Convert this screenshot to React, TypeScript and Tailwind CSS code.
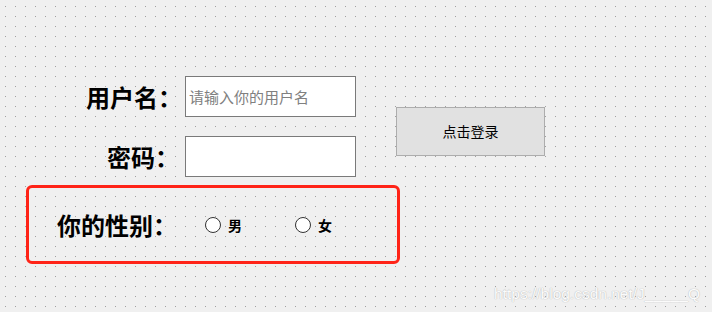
import { useState } from "react";

// ===========================================================================
// Login form (designer preview with dotted grid)
// ===========================================================================

const CJK = "font-['Noto_Sans_CJK_SC','Noto_Sans',sans-serif]";

interface RadioProps {
  label: string;
  checked: boolean;
  onSelect: () => void;
}

function Radio(props: RadioProps) {
  const { label, checked, onSelect } = props;
  return (
    <label className="flex items-center gap-[7px] cursor-pointer" onClick={onSelect}>
      <span className="flex h-4 w-4 items-center justify-center rounded-full border border-[#333333] bg-white">
        {checked && <span className="h-2 w-2 rounded-full bg-[#333333]" />}
      </span>
      <span className="text-[14px] font-bold leading-none text-black">{label}</span>
    </label>
  );
}

export default function App() {
  const [usuario, setUsuario] = useState("");
  const [senha, setSenha] = useState("");
  const [sexo, setSexo] = useState<string | null>(null);

  return (
    <div
      className={
        "relative h-[312px] w-[712px] overflow-hidden bg-[#f0f0f0] " +
        "bg-[linear-gradient(to_bottom,transparent_1px,#f0f0f0_1px),linear-gradient(to_right,#a0a0a0_1px,#f0f0f0_1px)] " +
        "bg-[length:10px_10px] bg-[position:5px_6px] " +
        CJK
      }
    >
      <div className="flex pt-[76px]">
        {/* linhas de usuario / senha */}
        <div className="flex flex-col gap-[19px]">
          <div className="flex items-center">
            <span className="w-[182px] text-right text-[24px] font-bold leading-none text-black">
              用户名：
            </span>
            <input
              className="ml-[3px] h-[41px] w-[171px] border border-[#7a7a7a] bg-white pl-[3px] text-[15px] text-black outline-none placeholder:text-[#808080]"
              placeholder="请输入你的用户名"
              value={usuario}
              onChange={(e) => setUsuario(e.target.value)}
            />
          </div>
          <div className="flex items-center">
            <span className="w-[179px] text-right text-[24px] font-bold leading-none text-black">
              密码：
            </span>
            <input
              type="password"
              className="ml-[6px] h-[41px] w-[171px] border border-[#7a7a7a] bg-white pl-[3px] text-[15px] outline-none"
              value={senha}
              onChange={(e) => setSenha(e.target.value)}
            />
          </div>
        </div>

        <button className="ml-[40px] mt-[31px] h-[49px] w-[149px] border border-[#adadad] bg-[#e1e1e1] text-[14px] text-black">
          点击登录
        </button>
      </div>

      {/* grupo de sexo */}
      <div className="ml-[26px] mt-[8px] flex h-[79px] w-[374px] items-center rounded-[6px] border-[3px] border-[#ff2418] pl-[28px]">
        <span className="w-[120px] text-[24px] font-bold leading-none text-black">你的性别：</span>
        <div className="ml-[28px] flex items-center gap-[53px]">
          <Radio label="男" checked={sexo === "m"} onSelect={() => setSexo("m")} />
          <Radio label="女" checked={sexo === "f"} onSelect={() => setSexo("f")} />
        </div>
      </div>

      {/* marca d'agua */}
      <span className="pointer-events-none absolute bottom-[7px] right-[12px] font-['Liberation_Sans',Arial,sans-serif] text-[15.5px] text-[#fbfbfb] [text-shadow:0_0_1px_#b8b8b8,0_0_1px_#c8c8c8]">
        https://blog.csdn.net/J_____Q
      </span>
    </div>
  );
}
